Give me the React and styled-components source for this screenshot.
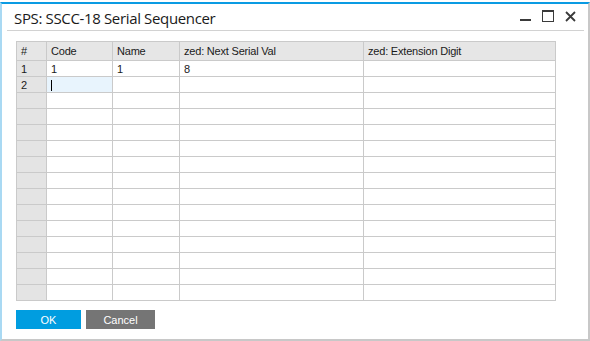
import styled, { createGlobalStyle } from "styled-components";

const GlobalStyle = createGlobalStyle`
  html, body {
    margin: 0;
    padding: 0;
    background: #ffffff;
  }
  body {
    font-family: "Open Sans", "Noto Sans", sans-serif;
  }
`;

const columns = [
  { label: "#", width: 30 },
  { label: "Code", width: 66 },
  { label: "Name", width: 67 },
  { label: "zed: Next Serial Val", width: 184 },
  { label: "zed: Extension Digit", width: 192 },
];

const rows = [
  ["1", "1", "1", "8", ""],
  ["2", "", "", "", ""],
];
while (rows.length < 15) rows.push(["", "", "", "", ""]);

export default function App() {
  return (
    <>
      <GlobalStyle />
      <Janela>
        <BarraTitulo>
          <Titulo>SPS: SSCC-18 Serial Sequencer</Titulo>
          <Controles>
            <svg width="11" height="12" viewBox="0 0 11 12">
              <rect x="0" y="9" width="11" height="2" fill="#3a3a3a" />
            </svg>
            <svg width="12" height="12" viewBox="0 0 12 12">
              <rect x="0.5" y="0.5" width="11" height="11" fill="none" stroke="#3a3a3a" />
              <rect x="0" y="0" width="12" height="2" fill="#3a3a3a" />
            </svg>
            <svg width="11" height="11" viewBox="0 0 11 11">
              <path d="M1 1 L10 10 M10 1 L1 10" stroke="#3a3a3a" strokeWidth="1.8" />
            </svg>
          </Controles>
        </BarraTitulo>
        <Conteudo>
          <Grade>
            <colgroup>
              {columns.map((c) => (
                <col key={c.label} style={{ width: c.width }} />
              ))}
            </colgroup>
            <thead>
              <tr>
                {columns.map((c) => (
                  <Cabecalho key={c.label}>{c.label}</Cabecalho>
                ))}
              </tr>
            </thead>
            <tbody>
              {rows.map((linha, i) => (
                <tr key={i}>
                  {linha.map((valor, j) =>
                    j === 0 ? (
                      <NumLinha key={j}>{valor}</NumLinha>
                    ) : (
                      <Celula key={j} $ativa={i === 1 && j === 1}>
                        {i === 1 && j === 1 ? <Cursor /> : valor}
                      </Celula>
                    )
                  )}
                </tr>
              ))}
            </tbody>
          </Grade>
          <Botoes>
            <Botao $cor="#009de0">OK</Botao>
            <Botao $cor="#757575" $largura={69}>Cancel</Botao>
          </Botoes>
        </Conteudo>
      </Janela>
    </>
  );
}

const Janela = styled.div`
  box-sizing: border-box;
  margin-top: 2px;
  width: 590px;
  height: 339px;
  border-top: 2px solid #0a9be3;
  border-left: 2px solid #a9d9f3;
  border-right: 2px solid #c8c8c8;
  border-bottom: 2px solid #c8c8c8;
  background: #ffffff;
  display: flex;
  flex-direction: column;
`;

const BarraTitulo = styled.div`
  height: 26px;
  margin: 0 4px 0 5px;
  border-bottom: 1px solid #d2d2d2;
  display: flex;
  align-items: center;
  justify-content: space-between;
`;

const Titulo = styled.div`
  font-size: 15px;
  color: #1a1a1a;
  padding-left: 7px;
  padding-top: 1px;
  letter-spacing: -0.35px;
`;

const Controles = styled.div`
  display: flex;
  align-items: center;
  gap: 11px;
  padding-right: 8px;
  padding-bottom: 2px;
`;

const Conteudo = styled.div`
  padding: 10px 0 0 14px;
  display: flex;
  flex-direction: column;
`;

const Grade = styled.table`
  border-collapse: collapse;
  table-layout: fixed;
  width: 540px;
  font-family: "Liberation Sans", Arial, sans-serif;
  font-size: 11px;
  letter-spacing: -0.2px;
  color: #1a1a1a;
  td, th {
    border: 1px solid #cacaca;
    padding: 0 0 0 4px;
    white-space: nowrap;
    overflow: hidden;
  }
`;

const Cabecalho = styled.th`
  height: 18px;
  background: #e6e6e6;
  font-weight: normal;
  text-align: left;
`;

const NumLinha = styled.td`
  height: 15px;
  background: #e4e4e4;
`;

const Celula = styled.td`
  height: 15px;
  background: ${(p) => (p.$ativa ? "#e8f4fd" : "#ffffff")};
`;

const Cursor = styled.span`
  display: inline-block;
  width: 1px;
  height: 11px;
  background: #000;
  vertical-align: middle;
`;

const Botoes = styled.div`
  display: flex;
  gap: 5px;
  margin-top: 9px;
`;

const Botao = styled.button`
  width: ${(p) => p.$largura || 65}px;
  height: 19px;
  border: none;
  background: ${(p) => p.$cor};
  color: #ffffff;
  font-family: "Liberation Sans", Arial, sans-serif;
  font-size: 11px;
  padding: 0;
`;
